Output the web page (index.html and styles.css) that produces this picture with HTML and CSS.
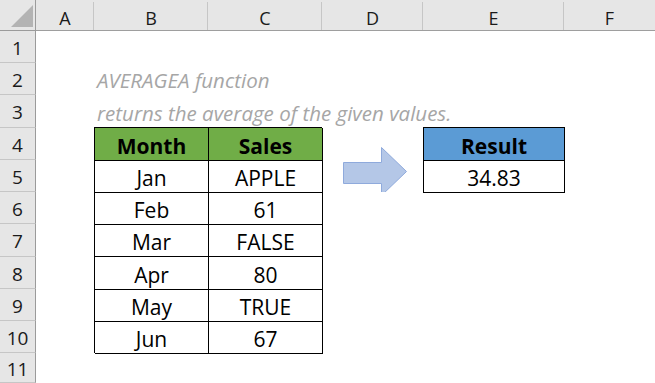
FILE: index.html
```html
<!DOCTYPE html>
<html>
<head>
<meta charset="utf-8">
<link rel="stylesheet" href="styles.css">
</head>
<body>
<div class="sheet">
  <div class="corner"><svg width="36" height="31" viewBox="0 0 36 31"><polygon points="33,5 33,27 11,27" fill="#b3b3b3"/></svg></div>
  <div class="colhead">A</div>
  <div class="colhead">B</div>
  <div class="colhead">C</div>
  <div class="colhead">D</div>
  <div class="colhead">E</div>
  <div class="colhead last">F</div>
  <div class="rowhead">1</div>
  <div class="rowhead">2</div>
  <div class="rowhead">3</div>
  <div class="rowhead">4</div>
  <div class="rowhead">5</div>
  <div class="rowhead">6</div>
  <div class="rowhead">7</div>
  <div class="rowhead">8</div>
  <div class="rowhead">9</div>
  <div class="rowhead">10</div>
  <div class="rowhead">11</div>

  <div class="title t1">AVERAGEA function</div>
  <div class="title t2">returns the average of the given values.</div>

  <div class="data">
    <div class="cell hd green">Month</div><div class="cell hd green">Sales</div>
    <div class="cell">Jan</div><div class="cell">APPLE</div>
    <div class="cell">Feb</div><div class="cell">61</div>
    <div class="cell">Mar</div><div class="cell">FALSE</div>
    <div class="cell">Apr</div><div class="cell">80</div>
    <div class="cell">May</div><div class="cell">TRUE</div>
    <div class="cell">Jun</div><div class="cell">67</div>
  </div>

  <div class="arrow">
    <svg width="101" height="65" viewBox="0 0 101 65"><polygon points="21.5,35.5 59.5,35.5 59.5,20.5 84.5,44.5 59.5,68.5 59.5,56.5 21.5,56.5" fill="#b4c7e7" stroke="#8faadc" stroke-width="1"/></svg>
  </div>

  <div class="result">
    <div class="cell hd blue">Result</div>
    <div class="cell">34.83</div>
  </div>
</div>
</body>
</html>
```
FILE: styles.css
```css
html, body {
  margin: 0;
  padding: 0;
  background: #ffffff;
}
body {
  font-family: "Open Sans", "Noto Sans", sans-serif;
  color: #000;
}
.sheet {
  width: 655px;
  height: 383px;
  display: grid;
  grid-template-columns: 36px 58px 114px 114px 101px 141px 91px;
  grid-template-rows: 31px 32px 32px 33px 32px 32px 32px 33px 32px 32px 32px 30px;
  overflow: hidden;
}
.corner {
  background: #e6e6e6;
  border-right: 1px solid #9b9b9b;
  border-bottom: 1px solid #9b9b9b;
  box-sizing: border-box;
}
.corner svg { display: block; }
.colhead {
  background: #e6e6e6;
  border-bottom: 1px solid #9e9e9e;
  box-sizing: border-box;
  display: flex;
  align-items: center;
  justify-content: center;
  font-size: 18px;
  padding-top: 6px;
  color: #1a1a1a;
  position: relative;
}
.colhead::after {
  content: "";
  position: absolute;
  right: 0;
  top: 2px;
  bottom: 0;
  width: 1px;
  background: #c6c6c6;
}
.colhead.last::after { display: none; }
.rowhead {
  grid-column: 1;
  background: #e6e6e6;
  border-right: 1px solid #9b9b9b;
  border-bottom: 1px solid #c6c6c6;
  box-sizing: border-box;
  display: flex;
  align-items: center;
  justify-content: center;
  font-size: 19px;
  padding-top: 2px;
  color: #1a1a1a;
}
.title {
  grid-column: 3 / 8;
  font-style: italic;
  color: #a6a6a6;
  font-size: 20.5px;
  padding-left: 3px;
  display: flex;
  align-items: flex-end;
  padding-bottom: 1px;
  white-space: nowrap;
}
.t1 { grid-row: 3; }
.t2 { grid-row: 4; }
.data {
  grid-column: 3 / 5;
  grid-row: 5 / 12;
  display: grid;
  grid-template-columns: 114px 114px;
  grid-template-rows: 33px 32px 32px 32px 33px 32px 32px;
  border-left: 1px solid #000;
  border-top: 1px solid #000;
  margin-top: -1px;
  height: 226px;
  box-sizing: border-box;
}
.cell {
  border-right: 1px solid #000;
  border-bottom: 1px solid #000;
  display: flex;
  align-items: center;
  justify-content: center;
  font-size: 21px;
  padding-top: 3px;
  box-sizing: border-box;
}
.cell.hd { font-weight: 700; }
.green { background: #70ad47; }
.blue { background: #5b9bd5; }
.arrow {
  grid-column: 5;
  grid-row: 5 / 7;
  margin-top: -1px;
}
.arrow svg { display: block; }
.result {
  grid-column: 6;
  grid-row: 5 / 7;
  display: grid;
  grid-template-rows: 33px 32px;
  border-left: 1px solid #000;
  border-top: 1px solid #000;
  margin-top: -1px;
  margin-right: -1px;
  height: 66px;
  box-sizing: border-box;
}
```
